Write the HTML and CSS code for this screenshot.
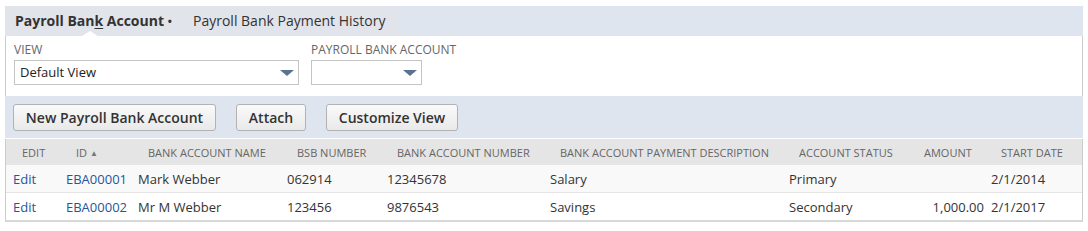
FILE: index.html
```html
<!DOCTYPE html>
<html lang="en">
<head>
    <meta charset="UTF-8">
    <title>Payroll Bank Account</title>
    <link rel="stylesheet" href="styles.css">
</head>
<body>
    <div class="tabbar">
        <div class="tabs">
            <div class="tab active">Payroll Ban<u>k</u> Account <span class="dot">&bull;</span></div>
            <div class="tab">Payroll Bank Payment History</div>
        </div>
    </div>

    <div class="filters">
        <div class="field">
            <label>View</label>
            <div class="select wide">Default View<span class="arrow"></span></div>
        </div>
        <div class="field">
            <label>Payroll Bank Account</label>
            <div class="select narrow"><span class="arrow"></span></div>
        </div>
    </div>

    <div class="toolbar">
        <button>New Payroll Bank Account</button>
        <button>Attach</button>
        <button>Customize View</button>
    </div>

    <div class="list">
        <table>
            <colgroup>
                <col style="width:55px"><col style="width:72px"><col style="width:149px">
                <col style="width:100px"><col style="width:163px"><col style="width:239px">
                <col style="width:140px"><col style="width:62px"><col style="width:96px">
            </colgroup>
            <thead>
                <tr>
                    <th class="first">Edit</th>
                    <th>ID <span class="sort">&#9650;</span></th>
                    <th>Bank Account Name</th>
                    <th>BSB Number</th>
                    <th>Bank Account Number</th>
                    <th>Bank Account Payment Description</th>
                    <th>Account Status</th>
                    <th class="num">Amount</th>
                    <th>Start Date</th>
                </tr>
            </thead>
            <tbody>
                <tr class="odd">
                    <td class="first"><a href="#">Edit</a></td>
                    <td><a href="#">EBA00001</a></td>
                    <td>Mark Webber</td>
                    <td>062914</td>
                    <td>12345678</td>
                    <td>Salary</td>
                    <td>Primary</td>
                    <td class="num"></td>
                    <td>2/1/2014</td>
                </tr>
                <tr>
                    <td class="first"><a href="#">Edit</a></td>
                    <td><a href="#">EBA00002</a></td>
                    <td>Mr M Webber</td>
                    <td>123456</td>
                    <td>9876543</td>
                    <td>Savings</td>
                    <td>Secondary</td>
                    <td class="num">1,000.00</td>
                    <td>2/1/2017</td>
                </tr>
            </tbody>
        </table>
    </div>
</body>
</html>
```

FILE: styles.css
```css
body {
    margin: 6px 5px 0 5px;
    font-family: "Open Sans", "Liberation Sans", Arial, sans-serif;
    color: #333333;
    background: #ffffff;
}
.tabbar {
    background: #dfe5ef;
    height: 30px;
}
.tabs {
    display: flex;
    height: 30px;
    width: 392px;
    background: #e1e4ea;
}
.tab {
    position: relative;
    padding: 0 0 0 10px;
    font-size: 14px;
    line-height: 30px;
    color: #333333;
    white-space: nowrap;
}
.tab.active {
    font-weight: 700;
    width: 168px;
}
.tab.active::after {
    content: "";
    position: absolute;
    left: 77px;
    bottom: 0;
    border-left: 8px solid transparent;
    border-right: 8px solid transparent;
    border-bottom: 5px solid #ffffff;
}
.tab u { text-underline-offset: 2px; }
.dot { font-size: 11px; vertical-align: 1px; }
.filters {
    display: flex;
    gap: 12px;
    height: 60px;
    padding: 0 0 0 8px;
    border-left: 1px solid #cccccc;
    border-right: 1px solid #cccccc;
    background: #ffffff;
}
.field label {
    display: block;
    font-size: 12px;
    text-transform: uppercase;
    color: #666666;
    margin: 6px 0 3px 0;
    line-height: 15px;
}
.select {
    position: relative;
    box-sizing: border-box;
    height: 25px;
    border: 1px solid #c4c4c4;
    font-size: 13px;
    line-height: 23px;
    padding-left: 5px;
    color: #222222;
}
.select.wide { width: 285px; }
.select.narrow { width: 111px; }
.arrow {
    position: absolute;
    right: 4px;
    top: 9px;
    border-left: 7px solid transparent;
    border-right: 7px solid transparent;
    border-top: 6px solid #5b7291;
}
.toolbar {
    display: flex;
    gap: 20px;
    height: 42px;
    box-sizing: border-box;
    padding: 8px 0 0 8px;
    background: #dfe5ef;
}
.toolbar button {
    height: 27px;
    padding: 0;
    font-family: "Open Sans", "Liberation Sans", Arial, sans-serif;
    font-size: 14px;
    font-weight: 600;
    color: #333333;
    white-space: nowrap;
    border: 1px solid #b2b2b2;
    border-radius: 3px;
    background: linear-gradient(#fafafa, #e9e9e9);
}
.toolbar button:first-child { width: 203px; }
.toolbar button:nth-child(2) { width: 70px; }
.toolbar button:nth-child(3) { width: 132px; }
.list {
    margin-top: 1px;
    border-left: 1px solid #cccccc;
    border-right: 1px solid #cccccc;
    border-bottom: 2px solid #d8d8d8;
}
table {
    width: 100%;
    table-layout: fixed;
    border-collapse: collapse;
}
th {
    height: 26px;
    padding: 0 5px 0 15px;
    background: #e5e5e5;
    font-size: 11px;
    font-weight: 400;
    text-transform: uppercase;
    text-align: left;
    color: #666666;
    white-space: nowrap;
}
th.first { padding-left: 16px; }
th.num { text-align: right; padding: 0 15px 0 0; }
.sort { font-size: 8px; color: #777777; vertical-align: 1px; }
td {
    height: 27px;
    padding: 0 5px;
    font-size: 13px;
    color: #333333;
    border-bottom: 1px solid #e4e4e4;
    white-space: nowrap;
}
tbody tr:last-child td { border-bottom: none; }
td.first { padding-left: 7px; }
td.num { text-align: right; padding-right: 2px; }
tr.odd td { background: #f9f9f9; }
a {
    color: #24569c;
    text-decoration: none;
}
```
